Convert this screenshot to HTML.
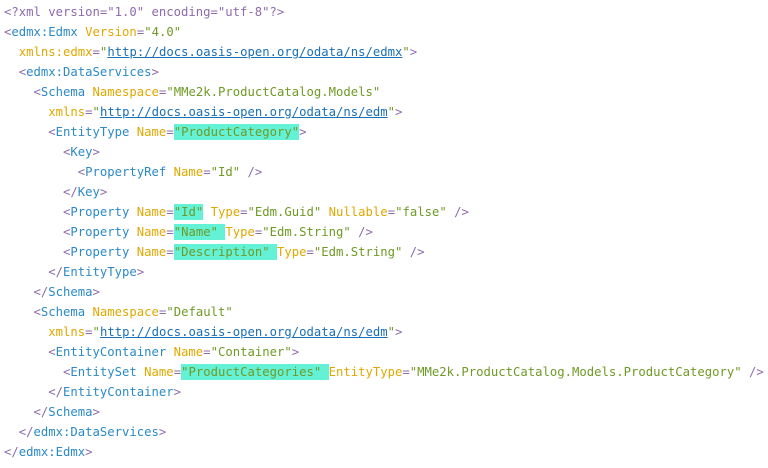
<!DOCTYPE html>
<html><head><meta charset="utf-8"><style>
html,body{margin:0;padding:0;background:#fff;width:768px;height:468px;overflow:hidden}
pre{margin:0;padding:2px 0 0 4px;font-family:"DejaVu Sans Mono",monospace;font-size:12.25px;line-height:20px;color:#8e6aae}
.t{color:#2b8ac6}.a{color:#e0a800}.s{color:#6f9a25}.u{color:#1a6fb5;text-decoration:underline}
.h{background:#64f2d6;padding:1px 0}.p{color:#8e6aae}
</style></head><body><pre>&lt;?xml <span class="p">version="1.0" encoding="utf-8"</span>?&gt;
&lt;<span class="t">edmx:Edmx</span> <span class="a">Version</span>=<span class="s">"4.0"</span>
  <span class="a">xmlns:edmx</span>=<span class="s">"</span><span class="u">http://docs.oasis-open.org/odata/ns/edmx</span><span class="s">"</span>&gt;
  &lt;<span class="t">edmx:DataServices</span>&gt;
    &lt;<span class="t">Schema</span> <span class="a">Namespace</span>=<span class="s">"MMe2k.ProductCatalog.Models"</span>
      <span class="a">xmlns</span>=<span class="s">"</span><span class="u">http://docs.oasis-open.org/odata/ns/edm</span><span class="s">"</span>&gt;
      &lt;<span class="t">EntityType</span> <span class="a">Name</span>=<span class="s h">"ProductCategory"</span>&gt;
        &lt;<span class="t">Key</span>&gt;
          &lt;<span class="t">PropertyRef</span> <span class="a">Name</span>=<span class="s">"Id"</span> /&gt;
        &lt;/<span class="t">Key</span>&gt;
        &lt;<span class="t">Property</span> <span class="a">Name</span>=<span class="s h">"Id"</span> <span class="a">Type</span>=<span class="s">"Edm.Guid"</span> <span class="a">Nullable</span>=<span class="s">"false"</span> /&gt;
        &lt;<span class="t">Property</span> <span class="a">Name</span>=<span class="s h">"Name" </span><span class="a">Type</span>=<span class="s">"Edm.String"</span> /&gt;
        &lt;<span class="t">Property</span> <span class="a">Name</span>=<span class="s h">"Description" </span><span class="a">Type</span>=<span class="s">"Edm.String"</span> /&gt;
      &lt;/<span class="t">EntityType</span>&gt;
    &lt;/<span class="t">Schema</span>&gt;
    &lt;<span class="t">Schema</span> <span class="a">Namespace</span>=<span class="s">"Default"</span>
      <span class="a">xmlns</span>=<span class="s">"</span><span class="u">http://docs.oasis-open.org/odata/ns/edm</span><span class="s">"</span>&gt;
      &lt;<span class="t">EntityContainer</span> <span class="a">Name</span>=<span class="s">"Container"</span>&gt;
        &lt;<span class="t">EntitySet</span> <span class="a">Name</span>=<span class="s h">"ProductCategories" </span><span class="a">EntityType</span>=<span class="s">"MMe2k.ProductCatalog.Models.ProductCategory"</span> /&gt;
      &lt;/<span class="t">EntityContainer</span>&gt;
    &lt;/<span class="t">Schema</span>&gt;
  &lt;/<span class="t">edmx:DataServices</span>&gt;
&lt;/<span class="t">edmx:Edmx</span>&gt;</pre></body></html>
